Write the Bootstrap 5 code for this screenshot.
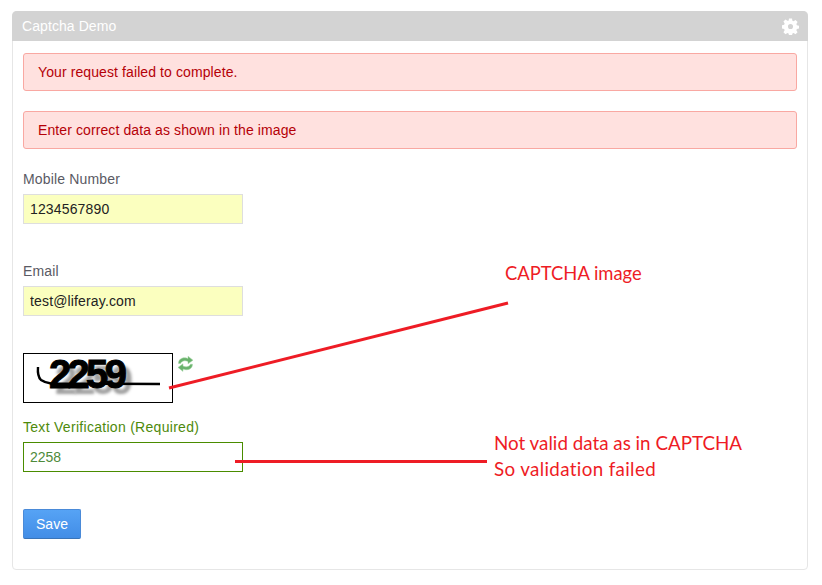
<!DOCTYPE html>
<html lang="en">
<head>
<meta charset="utf-8">
<title>Captcha Demo</title>
<link href="https://cdn.jsdelivr.net/npm/bootstrap@5.3.0/dist/css/bootstrap.min.css" rel="stylesheet">
<style>
html, body { background: #fff; }
body { font-family: "Liberation Sans", Arial, sans-serif; font-size: 14px; line-height: 20px; color: #555; }
.page-wrap { position: relative; width: 822px; height: 585px; padding: 11px 14px 0 12px; overflow: hidden; }
.demo-card { height: 559px; border: 1px solid #e6e6e6; border-radius: 4px; }
.demo-head { height: 30px; margin: -1px -1px 0; padding: 0 9px 0 10px; background: #d3d3d3; border: 0; border-radius: 4px 4px 0 0; color: #fff; }
.demo-head .title { font-size: 14px; letter-spacing: .08px; }
.demo-body { padding: 12px 10px 0; }
.demo-alert { height: 38px; margin-bottom: 20px; padding: 0 14px; border: 1px solid #f9a8a2; border-radius: 3px; background: #ffe1df; color: #b50007; font-size: 14px; letter-spacing: .1px; }
.field-label { display: block; margin-bottom: 5px; font-size: 14px; line-height: 20px; color: #5a5a64; letter-spacing: .16px; }
.field-input { display: block; width: 220px; height: 30px; padding: 0 6px; font-size: 14px; line-height: 20px; font-family: inherit; letter-spacing: .15px; border: 1px solid #dedede; border-radius: 0; background: #fbffbf; color: #222; box-shadow: none; }
.field-gap { margin-bottom: 37px; }
.captcha-row { margin-bottom: 14px; }
.captcha-box { position: relative; width: 150px; height: 50px; border: 1px solid #000; overflow: hidden; background: #fff; }
.captcha-text { position: absolute; left: 25px; top: -5px; font-size: 40px; line-height: 50px; font-weight: 700; letter-spacing: -3.7px; color: #000; -webkit-text-stroke: 1px #000; text-shadow: 6px 6px 3px #a0a0a0; }
.captcha-noise { position: absolute; left: 0; top: 0; }
.refresh-icon { margin: 2px 0 0 4px; }
.ok-label { color: #4e8a0b; letter-spacing: .29px; }
.ok-input { background: #fff; border-color: #4a8c00; color: #4e8a3a; letter-spacing: 0; }
.save-btn { width: 58px; height: 30px; padding: 0; font-size: 14px; line-height: 20px; color: #fff; background: #4a97ee linear-gradient(#56a3f5, #428de6); border: 1px solid #4a8ad8; border-bottom-color: #3a74b8; border-radius: 2px; }
.overlay-lines { position: absolute; left: 0; top: 0; pointer-events: none; }
.note { position: absolute; margin: 0; font-family: Lato, "Open Sans", sans-serif; line-height: 26px; color: #ee1c25; white-space: nowrap; }
.note-one { left: 505px; top: 260px; font-size: 18.4px; }
.note-two { left: 494px; top: 430px; font-size: 18.8px; }
.note-wide { letter-spacing: .35px; }
</style>
</head>
<body>
<div class="page-wrap">
  <div class="card demo-card">
    <div class="card-header demo-head d-flex align-items-center justify-content-between">
      <span class="title">Captcha Demo</span>
      <svg width="17" height="17" viewBox="0 0 18 18" aria-hidden="true"><path fill="#fff" fill-rule="evenodd" d="M7.4 0.5h3.2l.4 2.3 1.3.6 2-1.3 2.2 2.2-1.3 2 .5 1.3 2.3.5v3.1l-2.3.5-.5 1.3 1.3 2-2.2 2.2-2-1.3-1.3.5-.4 2.3H7.4L7 16.4l-1.3-.5-2 1.3-2.2-2.2 1.3-2-.5-1.3-2.3-.5V7.6l2.3-.5.5-1.3-1.3-2 2.2-2.2 2 1.3L7 2.8zM9 6.3a2.7 2.7 0 1 0 0 5.4 2.7 2.7 0 0 0 0-5.4z"/></svg>
    </div>
    <div class="card-body demo-body">
      <div class="alert demo-alert d-flex align-items-center" role="alert">Your request failed to complete.</div>
      <div class="alert demo-alert d-flex align-items-center" role="alert">Enter correct data as shown in the image</div>
      <form>
        <div class="field-gap">
          <label class="field-label" for="mobile">Mobile Number</label>
          <input class="form-control field-input" id="mobile" type="text" value="1234567890">
        </div>
        <div class="field-gap">
          <label class="field-label" for="email">Email</label>
          <input class="form-control field-input" id="email" type="text" value="test@liferay.com">
        </div>
        <div class="captcha-row d-flex align-items-start">
          <div class="captcha-box">
            <span class="captcha-text">2259</span>
            <svg class="captcha-noise" width="148" height="48" viewBox="0 0 148 48" aria-hidden="true"><path d="M14 13c-.5 6 0 10 3 13 3 2 6 3 10 3.500l109 .5" fill="none" stroke="#000" stroke-width="2.4"/></svg>
          </div>
          <svg class="refresh-icon" width="17" height="17" viewBox="0 0 17 17" aria-hidden="true">
            <path d="M1.500 8.500C1.500 5 4 2.800 7.500 2.800c1.500 0 2.500.2 3.500.8V1.200l5 4-5 3.600V6.600C9.500 5.800 8 5.600 6.500 6 5 6.400 4 7.200 3.600 8.500z" fill="#69b26c" stroke="#a5d6a5" stroke-width=".5"/>
            <path d="M15.500 9.200c0 3.400-2.500 5.600-6 5.600-1.500 0-2.500-.2-3.500-.8v2.400l-5-4 5-3.600v2.200c1.500.8 3 1 4.500.6 1.500-.4 2.500-1.200 2.900-2.400z" fill="#69b26c" stroke="#a5d6a5" stroke-width=".5"/>
          </svg>
        </div>
        <div class="field-gap">
          <label class="field-label ok-label" for="verify">Text Verification (Required)</label>
          <input class="form-control field-input ok-input" id="verify" type="text" value="2258">
        </div>
        <button class="btn btn-primary save-btn" type="button">Save</button>
      </form>
    </div>
  </div>
  <svg class="overlay-lines" width="822" height="585" viewBox="0 0 822 585" aria-hidden="true">
    <line x1="169" y1="388" x2="508" y2="303" stroke="#ee1c25" stroke-width="3"/>
    <line x1="235" y1="461.500" x2="487" y2="461.500" stroke="#ee1c25" stroke-width="3"/>
  </svg>
  <p class="note note-one">CAPTCHA image</p>
  <p class="note note-two">Not valid data as in CAPTCHA<br><span class="note-wide">So validation failed</span></p>
</div>
<script src="https://cdn.jsdelivr.net/npm/bootstrap@5.3.0/dist/js/bootstrap.bundle.min.js"></script>
</body>
</html>
